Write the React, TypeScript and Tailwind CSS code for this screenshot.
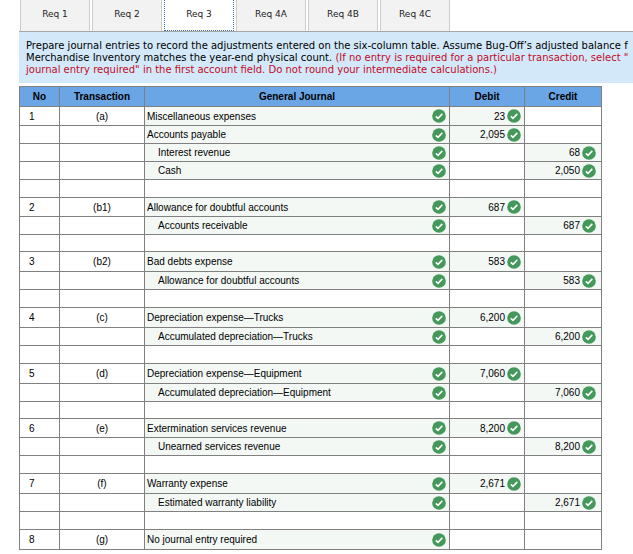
const tabs = ["Req 1", "Req 2", "Req 3", "Req 4A", "Req 4B", "Req 4C"];

type Row = {
  h: string;
  no?: string;
  tx?: string;
  account?: string;
  indent?: boolean;
  debit?: string;
  credit?: string;
};

const rows: Row[] = [
  { h: "h-[19px]", no: "1", tx: "(a)", account: "Miscellaneous expenses", debit: "23" },
  { h: "h-[18px]", account: "Accounts payable", debit: "2,095" },
  { h: "h-[18px]", account: "Interest revenue", indent: true, credit: "68" },
  { h: "h-[18px]", account: "Cash", indent: true, credit: "2,050" },
  { h: "h-[18px]" },
  { h: "h-[19px]", no: "2", tx: "(b1)", account: "Allowance for doubtful accounts", debit: "687" },
  { h: "h-[18px]", account: "Accounts receivable", indent: true, credit: "687" },
  { h: "h-[17px]" },
  { h: "h-[20px]", no: "3", tx: "(b2)", account: "Bad debts expense", debit: "583" },
  { h: "h-[18px]", account: "Allowance for doubtful accounts", indent: true, credit: "583" },
  { h: "h-[18px]" },
  { h: "h-[20px]", no: "4", tx: "(c)", account: "Depreciation expense—Trucks", debit: "6,200" },
  { h: "h-[18px]", account: "Accumulated depreciation—Trucks", indent: true, credit: "6,200" },
  { h: "h-[18px]" },
  { h: "h-[20px]", no: "5", tx: "(d)", account: "Depreciation expense—Equipment", debit: "7,060" },
  { h: "h-[18px]", account: "Accumulated depreciation—Equipment", indent: true, credit: "7,060" },
  { h: "h-[17px]" },
  { h: "h-[19px]", no: "6", tx: "(e)", account: "Extermination services revenue", debit: "8,200" },
  { h: "h-[18px]", account: "Unearned services revenue", indent: true, credit: "8,200" },
  { h: "h-[18px]" },
  { h: "h-[20px]", no: "7", tx: "(f)", account: "Warranty expense", debit: "2,671" },
  { h: "h-[18px]", account: "Estimated warranty liability", indent: true, credit: "2,671" },
  { h: "h-[18px]" },
  { h: "h-[20px]", no: "8", tx: "(g)", account: "No journal entry required" },
];

function Check() {
  return (
    <svg viewBox="0 0 14 14" className="w-[14px] h-[14px] shrink-0">
      <circle cx="7" cy="7" r="6.8" fill="#43985a" />
      <path d="M3.8 7.3 L6 9.4 L10.3 4.9" fill="none" stroke="#fff" strokeWidth="1.6" />
    </svg>
  );
}

function Amount({ value, credit }: { value?: string; credit?: boolean }) {
  if (!value) return <td className="border border-[#808080] p-0" />;
  return (
    <td className="border border-[#808080] p-0 bg-[#f3f8f5]">
      <div className={credit ? "flex items-center justify-end gap-[2px] pr-[5px]" : "flex items-center justify-end gap-[2px] pr-[3px]"}>
        <span className="pt-[1px]">{value}</span>
        <Check />
      </div>
    </td>
  );
}

export default function App() {
  return (
    <div className="w-[633px] h-[554px] overflow-hidden bg-white pl-[19px] font-['Liberation_Sans',sans-serif] text-[#000]">
      <div className="flex gap-[2px] pl-[1px] h-[31px] w-[614px] font-['DejaVu_Sans',sans-serif] text-[9px] text-[#222]">
        {tabs.map((t, i) => (
          <div
            key={t}
            className={
              i === 2
                ? "w-[70px] flex items-center justify-center bg-white border-x border-b border-dotted border-[#3a6fb5] pb-[1px]"
                : "w-[70px] flex items-center justify-center bg-[#f2f2f2] border-x border-[#cccccc] pb-[1px]"
            }
          >
            {t}
          </div>
        ))}
      </div>
      <div className="w-[614px] h-[52px] border-t border-[#a6a6a6] bg-[#d3e9f9] pl-[7px] pt-[8px] font-['DejaVu_Sans',sans-serif] text-[10px] leading-[12px] whitespace-nowrap overflow-hidden">
        <p>Prepare journal entries to record the adjustments entered on the six-column table. Assume Bug-Off’s adjusted balance f</p>
        <p>
          Merchandise Inventory matches the year-end physical count.{" "}
          <span className="text-[#c4091f]">(If no entry is required for a particular transaction, select "</span>
        </p>
        <p className="text-[#c4091f]">journal entry required" in the first account field. Do not round your intermediate calculations.)</p>
      </div>
      <table className="mt-[3px] w-[582px] table-fixed border-collapse text-[10px] leading-[12px]">
        <colgroup>
          <col className="w-[40px]" />
          <col className="w-[85px]" />
          <col className="w-[305px]" />
          <col className="w-[75px]" />
          <col className="w-[77px]" />
        </colgroup>
        <thead>
          <tr className="h-[20px] bg-[#6aa5e5] font-bold text-center">
            <th className="border border-[#808080] p-0 pt-[1px]">No</th>
            <th className="border border-[#808080] p-0 pt-[1px]">Transaction</th>
            <th className="border border-[#808080] p-0 pt-[1px]">General Journal</th>
            <th className="border border-[#808080] p-0 pt-[1px]">Debit</th>
            <th className="border border-[#808080] p-0 pt-[1px]">Credit</th>
          </tr>
        </thead>
        <tbody>
          {rows.map((r, i) => (
            <tr key={i} className={r.h}>
              <td className="border border-[#808080] p-0 pl-[9px] pt-[1px]">{r.no}</td>
              <td className="border border-[#808080] p-0 pt-[1px] text-center">{r.tx}</td>
              {r.account ? (
                <td className="border border-[#808080] p-0 bg-[#f3f8f5]">
                  <div className="flex items-center justify-between pr-[3px]">
                    <span className={r.indent ? "pl-[13px] pt-[1px]" : "pl-[2px] pt-[1px]"}>{r.account}</span>
                    <Check />
                  </div>
                </td>
              ) : (
                <td className="border border-[#808080] p-0" />
              )}
              <Amount value={r.debit} />
              <Amount value={r.credit} credit />
            </tr>
          ))}
        </tbody>
      </table>
    </div>
  );
}
